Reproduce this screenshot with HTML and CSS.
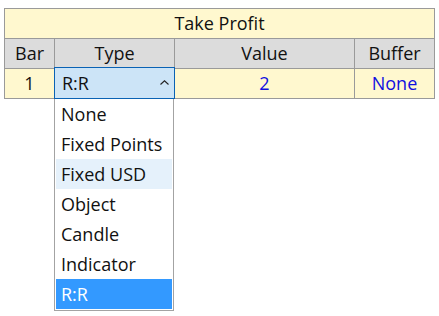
FILE: index.html
```html
<!DOCTYPE html>
<html>
<head>
<meta charset="utf-8">
<link rel="stylesheet" href="styles.css">
</head>
<body>
<div class="wrap">
<table class="grid">
  <colgroup>
    <col class="c-bar"><col class="c-type"><col class="c-value"><col class="c-buffer">
  </colgroup>
  <tr class="title-row"><td colspan="4">Take Profit</td></tr>
  <tr class="head-row"><td>Bar</td><td>Type</td><td>Value</td><td>Buffer</td></tr>
  <tr class="data-row">
    <td>1</td>
    <td class="type-cell"></td>
    <td class="blue">2</td>
    <td class="blue">None</td>
  </tr>
</table>
<div class="select"><span>R:R</span>
  <svg class="caret" width="9" height="5" viewBox="0 0 9 5"><path d="M0.5 4.5 L4.5 0.8 L8.5 4.5" fill="none" stroke="#222" stroke-width="1.1"/></svg>
</div>
<div class="list">
  <div class="item">None</div>
  <div class="item">Fixed Points</div>
  <div class="item hot">Fixed USD</div>
  <div class="item">Object</div>
  <div class="item">Candle</div>
  <div class="item">Indicator</div>
  <div class="item picked">R:R</div>
</div>
</div>
</body>
</html>
```
FILE: styles.css
```css
html, body { margin: 0; padding: 0; background: #fff; }
body { padding: 8px 0 0 4px; font-family: "Open Sans", "Noto Sans", sans-serif; font-size: 18px; color: #111; }
.wrap { position: relative; width: 430px; }
.grid { border-collapse: collapse; table-layout: fixed; width: 430px; }
.c-bar { width: 50px; }
.c-type { width: 120px; }
.c-value { width: 180px; }
.c-buffer { width: 80px; }
.grid td { border: 1px solid #9a9a9a; height: 29px; padding: 0; text-align: center; line-height: 29px; }
.title-row td { background: #fff8cf; }
.head-row td { background: #dcdcdc; }
.data-row td { background: #fff8cf; }
.blue { color: #1010e0; }
.select { position: absolute; left: 50px; top: 59px; background: #cce4f7; border: 1px solid #0a62b4; display: flex; align-items: center; justify-content: space-between; padding: 0 5px 0 7px; box-sizing: border-box; width: 121px; height: 32px; line-height: 30px; }
.caret { display: block; margin-top: -1px; }
.list { margin-left: 50px; width: 120px; box-sizing: border-box; padding: 0 1px 1px 1px; background: #fff; border: 1px solid #a3a3a3; border-top: none; }
.item { height: 30px; line-height: 30px; padding-left: 5px; }
.item.hot { background: #e5f1fb; }
.item.picked { background: #3399ff; color: #fff; }
```
